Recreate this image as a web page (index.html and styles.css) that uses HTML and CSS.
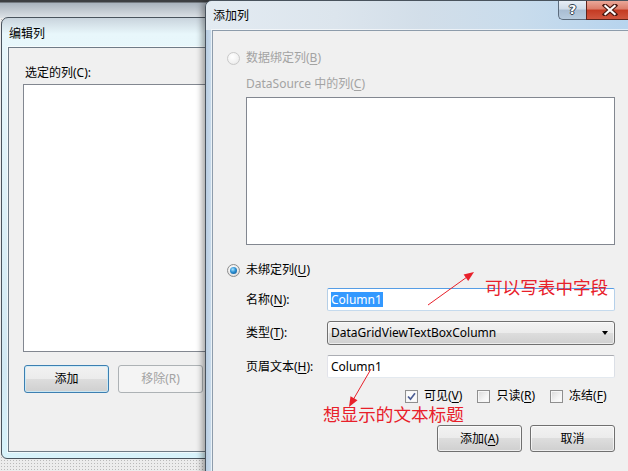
FILE: index.html
```html
<!DOCTYPE html>
<html lang="zh-CN">
<head>
<meta charset="utf-8">
<title>添加列</title>
<link rel="stylesheet" href="styles.css">
</head>
<body>
<div class="desktop">

  <div class="win win-left">
    <div class="titlebar"><span class="title">编辑列</span></div>
    <div class="client lclient">
      <div class="cap lcap">选定的列(C):</div>
      <div class="listbox lb-left"></div>
      <div class="lbtns">
        <button class="btn btn-focus">添加</button>
        <button class="btn btn-disabled">移除(R)</button>
      </div>
    </div>
  </div>

  <div class="win win-right">
    <div class="titlebar rtitle">
      <span class="title">添加列</span>
      <div class="capbtns">
        <span class="cb-help">?</span>
        <span class="cb-close">
          <svg width="16" height="12" viewBox="0 0 16 12">
            <path d="M3 1.5 L13 10.5 M13 1.5 L3 10.5" stroke="#4a1a12" stroke-width="4.4" stroke-linecap="square" fill="none"/>
            <path d="M3.4 2 L12.6 10 M12.6 2 L3.4 10" stroke="#ffffff" stroke-width="2.2" stroke-linecap="square" fill="none"/>
          </svg>
        </span>
      </div>
    </div>
    <div class="client rclient">
      <div class="opt is-disabled"><span class="radio radio-dis"></span><span>数据绑定列(<u>B</u>)</span></div>
      <div class="indent">
        <div class="cap is-disabled">DataSource 中的列(<u>C</u>)</div>
        <div class="listbox lb-right"></div>
      </div>
      <div class="opt opt-u"><span class="radio radio-on"></span><span>未绑定列(<u>U</u>)</span></div>
      <div class="indent form">
        <label class="flabel">名称(<u>N</u>):</label>
        <div class="field field-focus"><span class="sel">Column1</span></div>
        <label class="flabel">类型(<u>T</u>):</label>
        <div class="combo"><span>DataGridViewTextBoxColumn</span><span class="caret"></span></div>
        <label class="flabel">页眉文本(<u>H</u>):</label>
        <div class="field"><span>Column1</span></div>
      </div>
      <div class="indent checks">
        <span class="chk">
          <span class="box box-on"><svg width="9" height="9" viewBox="0 0 9 9"><path d="M1 4.5 L3.5 7.2 L8 1.3" stroke="#4d5f95" stroke-width="1.7" fill="none"/></svg></span>
          <span>可见(<u>V</u>)</span>
        </span>
        <span class="chk"><span class="box"></span><span>只读(<u>R</u>)</span></span>
        <span class="chk"><span class="box"></span><span>冻结(<u>F</u>)</span></span>
      </div>
      <div class="indent actions">
        <button class="btn">添加(<u>A</u>)</button>
        <button class="btn">取消</button>
      </div>
    </div>
  </div>

  <svg class="arrows" width="628" height="471" viewBox="0 0 628 471">
    <line x1="428" y1="305" x2="467" y2="277" stroke="#e8202a" stroke-width="1"/>
    <polygon points="474,272 468.2,281.1 463.6,274.6" fill="#e8202a"/>
    <line x1="371" y1="369" x2="353" y2="400" stroke="#e8202a" stroke-width="1"/>
    <polygon points="349,407 357.5,400.3 350.5,396.3" fill="#e8202a"/>
  </svg>
  <div class="note note1">可以写表中字段</div>
  <div class="note note2">想显示的文本标题</div>
</div>
</body>
</html>
```

FILE: styles.css
```css
html, body {
  margin: 0;
  padding: 0;
}
body {
  width: 628px;
  height: 471px;
  overflow: hidden;
  font-family: "Noto Sans", "Noto Sans CJK SC", sans-serif;
  font-size: 12px;
  color: #000;
  background:
    linear-gradient(#3d3f42 0, #3d3f42 2px, #a9b3bd 3px, #dde2e7 18px) top left / 100% 18px no-repeat,
    radial-gradient(circle, #b9b9b9 0.7px, transparent 1px) 0 0 / 3px 3px,
    #ececec;
}
.desktop {
  position: relative;
  width: 628px;
  height: 471px;
  overflow: hidden;
}

/* ---------- windows ---------- */
.win {
  position: absolute;
  box-sizing: border-box;
  display: flex;
  flex-direction: column;
  border: 1px solid #49535d;
  border-radius: 7px 7px 6px 6px;
  padding: 0 6px 6px 6px;
}
.win-left {
  left: 1px;
  top: 17px;
  width: 270px;
  height: 442px;
  background: linear-gradient(#c9d4dd 0, #e8f7fb 16px, #dcf0f7 45%, #d2e9f3 80%, #d8f3fb 100%);
}
.win-right {
  left: 205px;
  top: 0;
  width: 434px;
  height: 482px;
  background: linear-gradient(to right, #b9cde2 0, #c9dbeb 5px, #c3d7ea 100%);
  box-shadow: -3px 0 6px rgba(0, 0, 0, 0.35);
}
.titlebar {
  display: flex;
  align-items: center;
  height: 29px;
  flex: none;
  margin: 0 -6px;
  padding-left: 7px;
}
.rtitle {
  align-items: flex-start;
  border-radius: 6px 6px 0 0;
  background: linear-gradient(to right, #e3ebf2 0, #dce5ed 30%, #d2dee9 50%, #c9dcec 72%, #b5d3ee 100%);
}
.rtitle .title {
  line-height: 29px;
}
.title {
  font-size: 12px;
}
.capbtns {
  display: flex;
  margin-left: auto;
  margin-right: 5px;
}
.cb-help {
  box-sizing: border-box;
  width: 28px;
  height: 19px;
  border: 1px solid #5c6b7c;
  border-top: none;
  border-right: none;
  border-radius: 0 0 0 5px;
  background: linear-gradient(#e7eef6 0, #cfdbe8 45%, #a9bdd2 50%, #b7cbde 100%);
  color: #fff;
  font-family: "DejaVu Sans", sans-serif;
  font-weight: bold;
  font-size: 13px;
  line-height: 18px;
  text-align: center;
  text-shadow: 1px 0 0 #34414f, -1px 0 0 #34414f, 0 1px 0 #34414f, 0 -1px 0 #34414f;
}
.cb-close {
  box-sizing: border-box;
  display: flex;
  align-items: center;
  justify-content: center;
  width: 47px;
  height: 19px;
  border: 1px solid #5e241b;
  border-top: none;
  background: linear-gradient(#eaa899 0, #dc7c69 45%, #c43a22 50%, #d0563f 100%);
}

/* ---------- client areas ---------- */
.client {
  flex: 1;
  box-sizing: border-box;
  background: #f0f0f0;
  border: 1px solid #6f7b86;
  box-shadow: 0 0 0 1px rgba(255, 255, 255, 0.6);
}
.lclient {
  padding: 17px 0 0 14px;
}
.rclient {
  padding-top: 19px;
  border-color: #8d9cab;
}
.cap {
  line-height: 16px;
  height: 16px;
  white-space: nowrap;
}
.lcap {
  margin-left: 2px;
}
.listbox {
  box-sizing: border-box;
  background: #fff;
  border: 1px solid #828790;
}
.lb-left {
  margin-top: 3px;
  width: 220px;
  height: 268px;
}
.lbtns {
  display: flex;
  gap: 9px;
  margin: 13px 0 0 1px;
}
.lbtns .btn {
  height: 28px;
}

/* right dialog */
.is-disabled {
  color: #a3a3a3;
}
.opt {
  display: flex;
  align-items: center;
  gap: 6px;
  height: 16px;
  line-height: 16px;
  padding-left: 14px;
}
.opt-u {
  margin-top: 17px;
}
.indent {
  margin-left: 33px;
  width: 369px;
}
.indent .cap {
  margin-top: 10px;
}
.lb-right {
  margin-top: 5px;
  height: 148px;
}
.radio {
  box-sizing: border-box;
  width: 13px;
  height: 13px;
  border-radius: 50%;
  border: 1px solid #8d8d8d;
  background: radial-gradient(circle at 40% 35%, #ffffff 0, #e8e8e8 60%, #cfcfcf 100%);
  display: flex;
  align-items: center;
  justify-content: center;
}
.radio-dis {
  border-color: #c9c9c9;
  background: radial-gradient(circle at 40% 35%, #ffffff 0, #f1f1f1 60%, #e2e2e2 100%);
}
.radio-on::after {
  content: "";
  width: 7px;
  height: 7px;
  border-radius: 50%;
  background: radial-gradient(circle at 40% 35%, #a8e4ff 0, #2b8fd2 45%, #0c4c86 100%);
}
.form {
  margin-top: 10px;
  display: grid;
  grid-template-columns: 81px 288px;
  grid-template-rows: 23px 24px 23px;
  row-gap: 10px;
  align-items: center;
}
.flabel {
  white-space: nowrap;
  line-height: 16px;
}
.field {
  box-sizing: border-box;
  height: 23px;
  background: #fff;
  border: 1px solid #abadb3;
  border-color: #abadb3 #dbdfe6 #e3e9ef #e2e3ea;
  padding-left: 3px;
  display: flex;
  align-items: center;
  line-height: 16px;
  border-radius: 2px;
}
.field-focus {
  border-color: #569de5 #b5d0ea #c5daed #b5cfe7;
}
.sel {
  background: #3399ff;
  color: #fff;
  line-height: 15px;
  padding-right: 1px;
}
.combo {
  box-sizing: border-box;
  height: 24px;
  border: 1px solid #707070;
  border-radius: 3px;
  background: linear-gradient(#f3f3f3 0, #ebebeb 50%, #dddddd 50%, #d0d0d0 100%);
  box-shadow: inset 0 0 0 1px rgba(255, 255, 255, 0.6);
  display: flex;
  align-items: center;
  padding: 0 6px 0 3px;
  line-height: 16px;
}
.caret {
  margin-left: auto;
  width: 0;
  height: 0;
  border-left: 3.5px solid transparent;
  border-right: 3.5px solid transparent;
  border-top: 4px solid #000;
}
.checks {
  margin-top: 10px;
  display: flex;
  align-items: center;
  gap: 15px;
  height: 16px;
  line-height: 16px;
  padding-left: 159px;
  box-sizing: border-box;
}
.chk {
  display: flex;
  align-items: center;
  gap: 6px;
  white-space: nowrap;
}
.box {
  box-sizing: border-box;
  width: 13px;
  height: 13px;
  border: 1px solid #8f8f8f;
  background: linear-gradient(135deg, #d9d9d9 0, #f4f4f4 60%, #ffffff 100%);
  box-shadow: inset 0 0 0 1px #f6f6f6;
  display: flex;
  align-items: center;
  justify-content: center;
}
.box-on {
  background: #fbfbfb;
}
.actions {
  margin-top: 21px;
  display: flex;
  justify-content: flex-end;
  gap: 8px;
}

/* buttons */
.btn {
  box-sizing: border-box;
  width: 85px;
  height: 27px;
  padding: 0;
  border: 1px solid #707070;
  border-radius: 3px;
  background: linear-gradient(#f2f2f2 0, #ebebeb 50%, #dddddd 50%, #cfcfcf 100%);
  box-shadow: inset 0 0 0 1px rgba(255, 255, 255, 0.65);
  font-family: inherit;
  font-size: 12px;
  color: #000;
  line-height: 16px;
}
.btn-focus {
  border-color: #3c7fb1;
  box-shadow: inset 0 0 0 1px rgba(200, 235, 250, 0.8);
}
.btn-disabled {
  border-color: #adb2b5;
  background: #f4f4f4;
  box-shadow: none;
  color: #a3a3a3;
}
u {
  text-decoration: underline;
  text-underline-offset: 2px;
}

/* annotations overlay */
.arrows {
  position: absolute;
  left: 0;
  top: 0;
  pointer-events: none;
}
.note {
  position: absolute;
  color: #e8202a;
  font-family: "Noto Sans CJK SC", sans-serif;
  font-size: 17.6px;
  line-height: 18px;
  white-space: nowrap;
}
.note1 {
  left: 485px;
  top: 278px;
}
.note2 {
  left: 323px;
  top: 405px;
}
```
